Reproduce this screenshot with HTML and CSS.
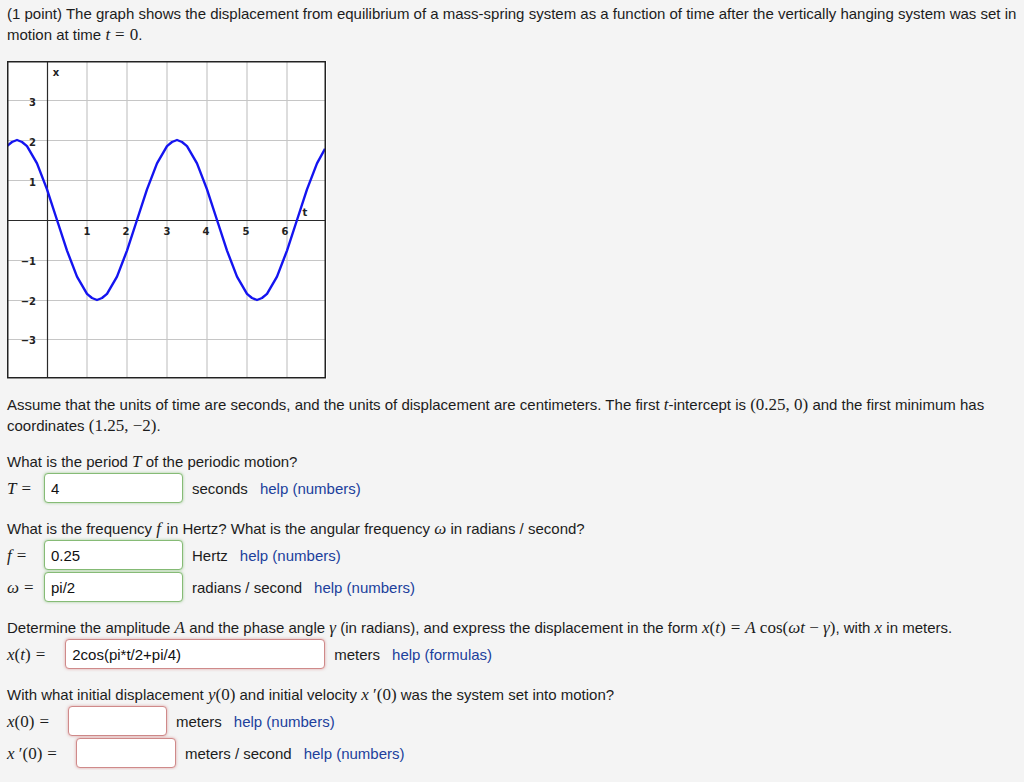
FILE: index.html
```html
<!DOCTYPE html>
<html>
<head>
<meta charset="utf-8">
<link rel="stylesheet" href="styles.css">
</head>
<body>
<div class="page">
  <p class="para intro">(1 point) The graph shows the displacement from equilibrium of a mass-spring system as a function of time after the vertically hanging system was set in motion at time <span class="m"><i>t</i><span class="rel">=</span>0</span>.</p>

  <svg class="graph" width="320" height="318" viewBox="7 61 320 318" xmlns="http://www.w3.org/2000/svg">
    <defs>
      <clipPath id="box"><rect x="8" y="62" width="317" height="316"/></clipPath>
    </defs>
    <rect x="7" y="61" width="320" height="318" fill="#ffffff"/>
    <g stroke="#c6c6c6" stroke-width="1.2" fill="none">
      <line x1="87" y1="62" x2="87" y2="378"/>
      <line x1="127" y1="62" x2="127" y2="378"/>
      <line x1="167" y1="62" x2="167" y2="378"/>
      <line x1="207" y1="62" x2="207" y2="378"/>
      <line x1="247" y1="62" x2="247" y2="378"/>
      <line x1="287" y1="62" x2="287" y2="378"/>
      <line x1="8" y1="100.5" x2="325" y2="100.5"/>
      <line x1="8" y1="140.5" x2="325" y2="140.5"/>
      <line x1="8" y1="180.5" x2="325" y2="180.5"/>
      <line x1="8" y1="260.5" x2="325" y2="260.5"/>
      <line x1="8" y1="300.5" x2="325" y2="300.5"/>
      <line x1="8" y1="339.5" x2="325" y2="339.5"/>
    </g>
    <g stroke="#2a2a2a" stroke-width="1.2">
      <line x1="47.5" y1="62" x2="47.5" y2="378"/>
      <line x1="8" y1="220.5" x2="325" y2="220.5"/>
    </g>
    <g class="lab">
      <text x="56" y="76" text-anchor="middle">x</text>
      <text x="305" y="215.5" text-anchor="middle">t</text>
      <text x="36" y="105.5" text-anchor="end">3</text>
      <text x="36" y="145.5" text-anchor="end">2</text>
      <text x="36" y="185.5" text-anchor="end">1</text>
      <text x="36" y="264.5" text-anchor="end">−1</text>
      <text x="36" y="304.5" text-anchor="end">−2</text>
      <text x="36" y="343.5" text-anchor="end">−3</text>
      <text x="87" y="235" text-anchor="middle">1</text>
      <text x="126" y="235" text-anchor="middle">2</text>
      <text x="167" y="235" text-anchor="middle">3</text>
      <text x="206" y="235" text-anchor="middle">4</text>
      <text x="246" y="235" text-anchor="middle">5</text>
      <text x="285" y="235" text-anchor="middle">6</text>
    </g>
    <polyline clip-path="url(#box)" fill="none" stroke="#1414f0" stroke-width="2.4" stroke-linejoin="round" points="7,146.1 12,142 17,140 22,142 27,146.1 37,163.4 47,189.4 57,220 67,250.6 77,276.6 87,293.9 92,298 97,300 102,298 107,293.9 117,276.6 127,250.6 137,220 147,189.4 157,163.4 167,146.1 172,142 177,140 182,142 187,146.1 197,163.4 207,189.4 217,220 227,250.6 237,276.6 247,293.9 252,298 257,300 262,298 267,293.9 277,276.6 287,250.6 297,220 307,189.4 317,163.4 325,148.7"/>
    <rect x="7.75" y="61.75" width="317.5" height="316" fill="none" stroke="#222222" stroke-width="1.5"/>
  </svg>

  <p class="para assume">Assume that the units of time are seconds, and the units of displacement are centimeters. The first <span class="m"><i>t</i></span>-intercept is <span class="m">(0.25, 0)</span> and the first minimum has coordinates <span class="m">(1.25, −2)</span>.</p>

  <div class="block">
    <p class="q">What is the period <span class="m"><i>T</i></span> of the periodic motion?</p>
    <div class="row">
      <span class="lbl"><span class="m"><i>T</i><span class="rel">=</span></span></span>
      <input class="ans ok w139" type="text" value="4">
      <span class="unit">seconds</span>
      <a class="help">help (numbers)</a>
    </div>
  </div>

  <div class="block">
    <p class="q">What is the frequency <span class="m"><i>f</i>&#8202;</span> in Hertz? What is the angular frequency <span class="m"><i>ω</i></span> in radians / second?</p>
    <div class="row">
      <span class="lbl"><span class="m"><i>f</i><span class="rel">=</span></span></span>
      <input class="ans ok w139" type="text" value="0.25">
      <span class="unit">Hertz</span>
      <a class="help">help (numbers)</a>
    </div>
    <div class="row">
      <span class="lbl"><span class="m"><i>ω</i><span class="rel">=</span></span></span>
      <input class="ans ok w139" type="text" value="pi/2">
      <span class="unit">radians / second</span>
      <a class="help">help (numbers)</a>
    </div>
  </div>

  <div class="block">
    <p class="q">Determine the amplitude <span class="m"><i>A</i></span> and the phase angle <span class="m"><i>γ</i></span> (in radians), and express the displacement in the form <span class="m"><i>x</i>(<i>t</i>)<span class="rel">=</span><i>A</i> cos(<i>ωt</i> − <i>γ</i>)</span>, with <span class="m"><i>x</i></span> in meters.</p>
    <div class="row">
      <span class="lbl wide xt"><span class="m"><i>x</i>(<i>t</i>)<span class="rel">=</span></span></span>
      <input class="ans bad w259" type="text" value="2cos(pi*t/2+pi/4)">
      <span class="unit">meters</span>
      <a class="help">help (formulas)</a>
    </div>
  </div>

  <div class="block">
    <p class="q">With what initial displacement <span class="m"><i>y</i>(0)</span> and initial velocity <span class="m"><i>x</i> ′(0)</span> was the system set into motion?</p>
    <div class="row">
      <span class="lbl wide"><span class="m"><i>x</i>(0)<span class="rel">=</span></span></span>
      <input class="ans bad w99" type="text" value="">
      <span class="unit">meters</span>
      <a class="help">help (numbers)</a>
    </div>
    <div class="row">
      <span class="lbl wide"><span class="m"><i>x</i> ′(0)<span class="rel">=</span></span></span>
      <input class="ans bad w100" type="text" value="">
      <span class="unit">meters / second</span>
      <a class="help">help (numbers)</a>
    </div>
  </div>
</div>
</body>
</html>
```

FILE: styles.css
```css
html, body {
  margin: 0;
  padding: 0;
  background: #f4f4f4;
}

body {
  font-family: "Liberation Sans", Arial, Helvetica, sans-serif;
  font-size: 15px;
  color: #1c1c1c;
}

.page {
  padding: 3px 0 0 7px;
}

.para {
  margin: 0;
  line-height: 21px;
}

.m {
  font-family: "Liberation Serif", "Times New Roman", serif;
  font-size: 17px;
  line-height: 1;
  white-space: nowrap;
}

.m i {
  font-style: italic;
}

.rel {
  margin: 0 5px;
  font-style: normal;
}

.graph {
  display: block;
  margin-top: 16px;
}

.lab text {
  font-family: "DejaVu Sans", Verdana, sans-serif;
  font-weight: bold;
  font-size: 10px;
  fill: #222222;
}

.assume {
  margin-top: 15px;
}

.block {
  margin-top: 15px;
}

.q {
  margin: 0 0 1px 0;
  line-height: 21px;
}

.row {
  display: flex;
  align-items: center;
  height: 30px;
  margin-bottom: 2px;
}

.lbl {
  width: 37px;
  flex: none;
  white-space: nowrap;
}

.lbl.wide {
  width: auto;
  margin-right: 14px;
}

.lbl.xt {
  margin-right: 15px;
}

.ans {
  box-sizing: border-box;
  flex: none;
  height: 30px;
  margin: 0;
  padding: 0 6px;
  border-radius: 4px;
  background: #ffffff;
  font-family: "Liberation Sans", Arial, sans-serif;
  font-size: 15px;
  color: #111111;
  outline: none;
}

.ok {
  border: 1px solid #86bb76;
  box-shadow: 0 0 3px rgba(90, 170, 70, 0.55);
}

.bad {
  border: 1px solid #cf8a8a;
  box-shadow: 0 0 3px rgba(200, 80, 80, 0.5);
}

.w139 { width: 139px; }
.w259 { width: 260px; }
.w99 { width: 99px; }
.w100 { width: 100px; }

.unit {
  margin-left: 9px;
}

.help {
  margin-left: 12px;
  color: #203f9c;
  text-decoration: none;
  cursor: pointer;
}
```
